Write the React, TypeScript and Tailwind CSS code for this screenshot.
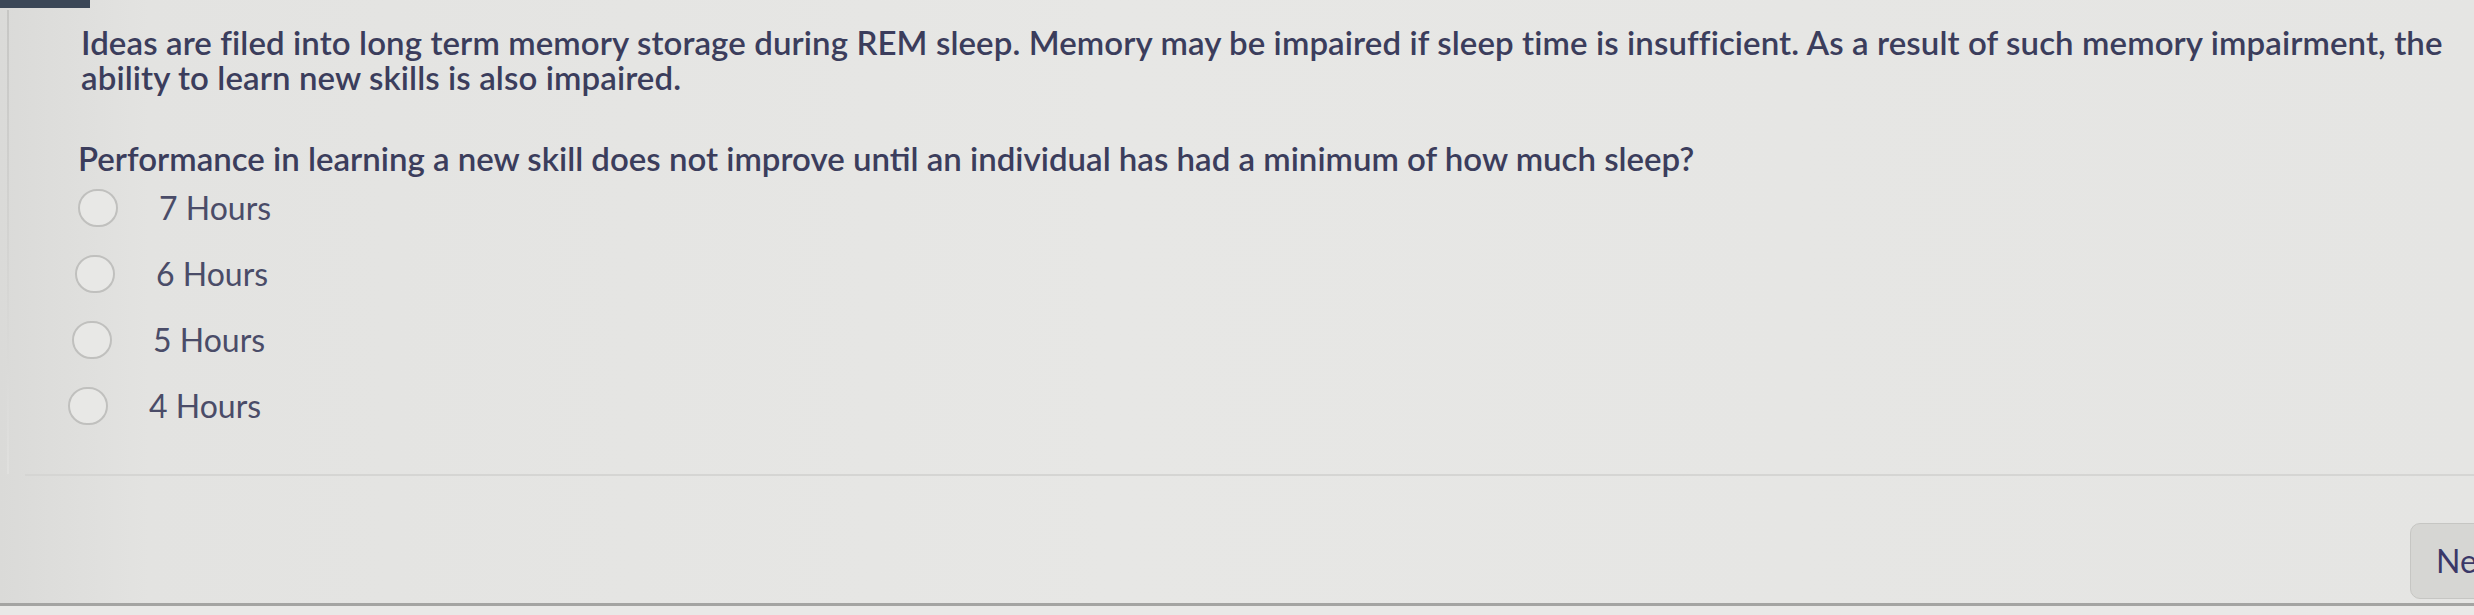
const options = [
  { label: "7 Hours", shift: "-ml-[3px]" },
  { label: "6 Hours", shift: "-ml-[6px]" },
  { label: "5 Hours", shift: "-ml-[9px]" },
  { label: "4 Hours", shift: "-ml-[13px]" },
];

function Radio({ label, shift }: { label: string; shift: string }) {
  return (
    <div className={`flex h-[66px] items-center ${shift}`}>
      <span className="h-[38px] w-[40px] shrink-0 rounded-full border-2 border-[#c0c0be] bg-[#e8e8e6]" />
      <span className="ml-[41px] text-[32px] leading-[40px] text-[#4a4c68]">{label}</span>
    </div>
  );
}

export default function App() {
  return (
    <div className="flex h-[615px] w-[2474px] flex-col overflow-hidden bg-[linear-gradient(90deg,#dadad8_0%,#e3e3e1_6%,#e7e7e5_45%,#e5e5e3_100%)] font-['Lato',sans-serif]">
      {/* header stub */}
      <div className="h-[8px] w-[90px] shrink-0 bg-[#3b4757]" />

      {/* question body */}
      <div className="flex h-[466px] shrink-0">
        <div className="ml-[7px] mt-[2px] w-[2px] shrink-0 bg-[linear-gradient(180deg,#c6c6c4_0%,#d2d2d0_45%,#e0e0de_100%)]" />
        <div className="flex-1 pl-[72px] pr-[4px] pt-[17px] text-[#3b3d5c]">
          <p className="text-[33px] font-semibold leading-[35px] tracking-[0.1px]">
            Ideas are filed into long term memory storage during REM sleep. Memory may be impaired if sleep time is
            insufficient. As a result of such memory impairment, the ability to learn new skills is also impaired.
          </p>
          <p className="mt-[46px] -ml-[3px] text-[33px] font-semibold leading-[34px]">
            Performance in learning a new skill does not improve until an individual has had a minimum of how much sleep?
          </p>
          <div className="flex flex-col">
            {options.map((o) => (
              <Radio key={o.label} label={o.label} shift={o.shift} />
            ))}
          </div>
        </div>
      </div>

      <div className="ml-[25px] h-[2px] shrink-0 bg-[#d5d5d3]" />

      {/* footer */}
      <div className="flex h-[127px] shrink-0 items-start justify-end pt-[47px]">
        <button className="-mr-[96px] flex h-[76px] w-[160px] shrink-0 items-center rounded-[10px] border border-[#c6c6c3] bg-[#d6d6d3] pl-[25px] text-[32px] text-[#3a3868]">
          Next
        </button>
      </div>

      <div className="h-[3px] shrink-0 bg-[#a4a4a2]" />
      <div className="flex-1 bg-[#e9e9e7]" />
    </div>
  );
}
